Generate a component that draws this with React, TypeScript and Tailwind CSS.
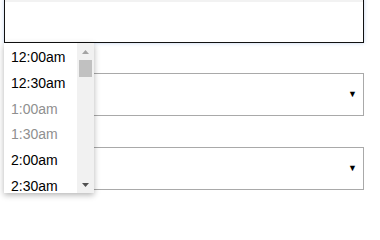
import React from 'react';

const times = [
    { label: '12:00am', disabled: false },
    { label: '12:30am', disabled: false },
    { label: '1:00am', disabled: true },
    { label: '1:30am', disabled: true },
    { label: '2:00am', disabled: false },
    { label: '2:30am', disabled: false },
];

function SelectBox() {
    return (
        <div className="flex h-[43px] w-[360px] items-center justify-end border border-[#a9a9a9] bg-white pr-[6px]">
            <span className="text-[9px] leading-none text-black">▼</span>
        </div>
    );
}

export default function App() {
    return (
        <div
            className="relative h-[202px] w-[380px] overflow-hidden bg-white"
            style={{ fontFamily: '"Liberation Sans", Arial, sans-serif' }}
        >
            {/* focused text box, scrolled so its top edge is cut off */}
            <div className="ml-[4px] mt-[-1px] h-[44px] w-[360px] border border-[#111] bg-white shadow-[0_0_4px_rgba(120,160,220,0.45)]">
                <div className="h-[2px] bg-[#f2f2f2]" />
            </div>

            <div className="ml-[4px] mt-[30px]">
                <SelectBox />
            </div>
            <div className="ml-[4px] mt-[31px]">
                <SelectBox />
            </div>

            <div className="absolute left-[4px] top-[43px] flex h-[150px] w-[90px] bg-white shadow-[0_2px_6px_rgba(0,0,0,0.3)]">
                <ul className="flex-1 overflow-hidden pt-[2px]">
                    {times.map((t) => (
                        <li
                            key={t.label}
                            className={
                                'h-[25.8px] pl-[7px] text-[14px] leading-[25.8px] ' +
                                (t.disabled ? 'text-[#8f8f8f]' : 'text-black')
                            }
                        >
                            {t.label}
                        </li>
                    ))}
                </ul>
                <div className="flex w-[17px] flex-col items-center bg-[#f1f1f1]">
                    <div className="flex h-[17px] items-center justify-center">
                        <svg width="7" height="4" viewBox="0 0 7 4">
                            <path d="M3.5 0L7 4H0z" fill="#a3a3a3" />
                        </svg>
                    </div>
                    <div className="h-[17px] w-[13px] bg-[#c1c1c1]" />
                    <div className="flex-1" />
                    <div className="flex h-[17px] items-center justify-center">
                        <svg width="7" height="4" viewBox="0 0 7 4">
                            <path d="M0 0H7L3.5 4z" fill="#505050" />
                        </svg>
                    </div>
                </div>
            </div>
        </div>
    );
}
